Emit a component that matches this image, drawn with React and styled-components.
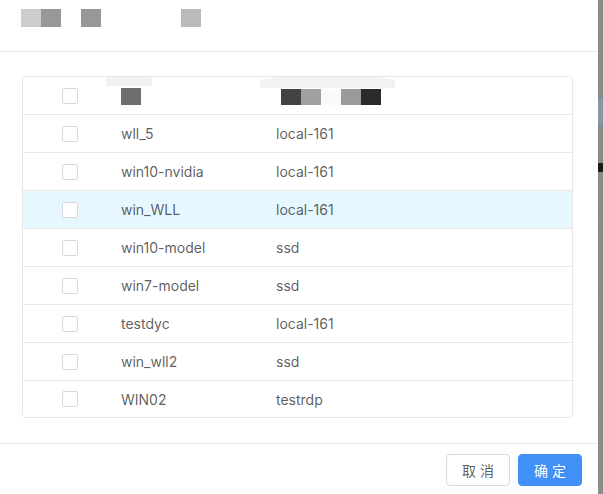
import React from "react";
import styled, { createGlobalStyle } from "styled-components";

const Global = createGlobalStyle`
  html, body { margin: 0; padding: 0; background: #fff; }
  body { font-family: Inter, "Noto Sans CJK SC", sans-serif; }
`;

const Page = styled.div`
  display: flex;
  width: 603px;
  height: 494px;
  overflow: hidden;
`;

const Modal = styled.div`
  width: 598px;
  flex: none;
  display: flex;
  flex-direction: column;
  background: #fff;
`;

const Header = styled.div`
  height: 52px;
  box-sizing: border-box;
  border-bottom: 1px solid #e8e8e8;
  padding: 9px 21px 0;
`;

const Mosaic = styled.div`
  display: flex;
  align-items: flex-start;
  position: relative;
`;

const Tile = styled.span`
  display: block;
  position: relative;
  width: ${(p) => p.$w || 20}px;
  height: ${(p) => p.$h || 18}px;
  background: ${(p) => p.$c};
  margin-left: ${(p) => p.$gap || 0}px;
`;

const Body = styled.div`
  padding: 24px 25px 25px 22px;
`;

const Table = styled.div`
  border: 1px solid #e8e8e8;
  border-radius: 4px;
  overflow: hidden;
`;

const Row = styled.div`
  display: grid;
  grid-template-columns: 98px 155px 1fr;
  align-items: center;
  height: 37px;
  border-bottom: 1px solid #e8e8e8;
  background: ${(p) => (p.$active ? "#e6f7ff" : "#fff")};
  &:last-child { border-bottom: none; height: 36px; }
`;

const CheckCell = styled.div`
  padding-left: 39px;
  display: flex;
  align-items: center;
`;

const Checkbox = styled.span`
  display: block;
  width: 14px;
  height: 14px;
  border: 1px solid #d9d9d9;
  border-radius: 2px;
  background: #fff;
`;

const Cell = styled.div`
  font-size: 14px;
  color: rgba(0, 0, 0, 0.65);
  white-space: nowrap;
`;

const HeadCell = styled.div`
  position: relative;
  display: flex;
  padding-left: ${(p) => p.$pad || 0}px;
  padding-top: 2px;
`;

const Blob = styled.span`
  position: absolute;
  left: ${(p) => p.$l}px;
  top: ${(p) => p.$t}px;
  width: ${(p) => p.$w}px;
  height: 13px;
  background: #f2f2f2;
  border-radius: 50% 50% 0 0;
`;

const Footer = styled.div`
  border-top: 1px solid #e8e8e8;
  padding: 10px 16px 0;
  display: flex;
  justify-content: flex-end;
  gap: 8px;
`;

const Button = styled.button`
  width: 64px;
  height: 32px;
  box-sizing: border-box;
  border-radius: 4px;
  font-family: "Noto Sans CJK SC", sans-serif;
  font-size: 14px;
  letter-spacing: 4px;
  padding: 0 0 0 4px;
  cursor: pointer;
  border: 1px solid ${(p) => (p.$primary ? "#4090f7" : "#d9d9d9")};
  background: ${(p) => (p.$primary ? "#4090f7" : "#fff")};
  color: ${(p) => (p.$primary ? "#fff" : "rgba(0,0,0,0.65)")};
`;

const Backdrop = styled.div`
  flex: 1;
  background: #8c8c8c;
  display: flex;
  flex-direction: column;
`;

const Stripe = styled.div`
  height: ${(p) => p.$h}px;
  flex: none;
  background: ${(p) => p.$bg || "transparent"};
  border-bottom: 1px solid ${(p) => p.$line || "#828282"};
`;

const rows = [
  ["wll_5", "local-161"],
  ["win10-nvidia", "local-161"],
  ["win_WLL", "local-161", true],
  ["win10-model", "ssd"],
  ["win7-model", "ssd"],
  ["testdyc", "local-161"],
  ["win_wll2", "ssd"],
  ["WIN02", "testrdp"],
];

export default function App() {
  return (
    <>
      <Global />
      <Page>
        <Modal>
          <Header>
            <Mosaic>
              <Tile $c="#cdcdcd" />
              <Tile $c="#989898" />
              <Tile $c="#989898" $gap={20} />
              <Tile $c="#bababa" $gap={80} />
            </Mosaic>
          </Header>
          <Body>
            <Table>
              <Row>
                <CheckCell>
                  <Checkbox />
                </CheckCell>
                <HeadCell>
                  <Blob $l={-15} $t={-13} $w={46} />
                  <Tile $c="#6e6e6e" $h={17} />
                </HeadCell>
                <HeadCell $pad={5}>
                  <Blob $l={-16} $t={-12} $w={135} />
                  <Tile $c="#434343" $h={16} />
                  <Tile $c="#a0a0a0" $h={16} />
                  <Tile $c="#fafafa" $h={16} />
                  <Tile $c="#9a9a9a" $h={16} />
                  <Tile $c="#2a2a2a" $h={16} />
                </HeadCell>
              </Row>
              {rows.map(([name, store, active]) => (
                <Row key={name} $active={active}>
                  <CheckCell>
                    <Checkbox />
                  </CheckCell>
                  <Cell>{name}</Cell>
                  <Cell>{store}</Cell>
                </Row>
              ))}
            </Table>
          </Body>
          <Footer>
            <Button>取消</Button>
            <Button $primary>确定</Button>
          </Footer>
        </Modal>
        <Backdrop>
          <Stripe $h={13} />
          <Stripe $h={18} />
          <Stripe $h={30} />
          <Stripe $h={18} />
          <Stripe $h={14} $line="#6f87a3" />
          <Stripe $h={27} $bg="#8b96a3" $line="#6f87a3" />
          <Stripe $h={31} />
          <Stripe $h={19} $bg="linear-gradient(#8c8c8c 0 5px, #1a1a1a 5px 14px, #8c8c8c 14px)" />
          <Stripe $h={33} />
          <Stripe $h={19} />
          <Stripe $h={59} />
          <Stripe $h={59} />
          <Stripe $h={59} />
          <Stripe $h={52} />
        </Backdrop>
      </Page>
    </>
  );
}
